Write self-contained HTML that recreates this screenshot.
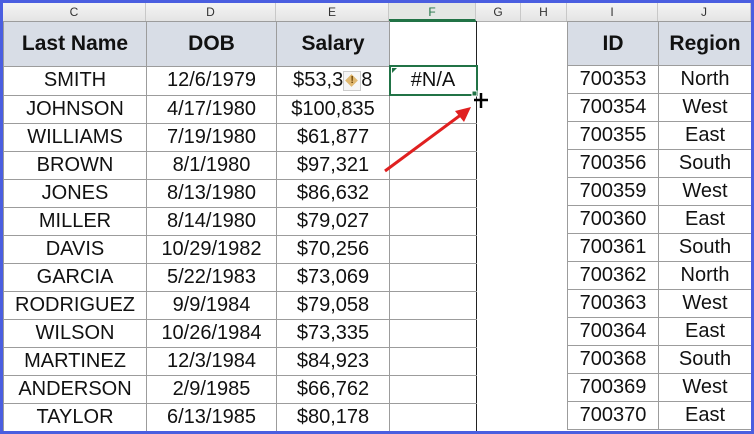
<!DOCTYPE html>
<html><head><style>
body{margin:0;width:754px;height:434px;overflow:hidden;background:#fff;font-family:"Liberation Sans",Arial,sans-serif;position:relative}
.frame{position:absolute;left:0;top:0;width:748px;height:428px;border:3px solid #4a5ee0;z-index:10;pointer-events:none}
.colhdr{position:absolute;top:3px;left:3px;width:748px;height:18px;background:linear-gradient(#f4f4f4,#e4e4e4);border-bottom:1px solid #b0b0b0}
.ch{position:absolute;top:3px;height:18px;font-size:12px;color:#333;text-align:center;line-height:18px;border-right:1px solid #c8c8c8;box-sizing:border-box}
table{position:absolute;border-collapse:collapse;table-layout:fixed}
td{border:1px solid #9c9c9c;text-align:center;font-size:20px;padding:0;height:27px;white-space:nowrap;overflow:hidden;color:#111}
tr.h td{height:43px;background:#d8dde6;font-weight:bold;font-size:21px}
td.f{border-left:1px solid #222;border-right:1px solid #222;background:#fff}
tr.h td.f{background:#fff;border-top:1px solid #217346}
</style></head><body>
<div class="colhdr"></div>
<div class="ch" style="left:3px;width:143px">C</div>
<div class="ch" style="left:146px;width:130px">D</div>
<div class="ch" style="left:276px;width:113px">E</div>
<div class="ch" style="left:389px;width:87px;background:#e4e7e4;border-bottom:2px solid #217346;color:#217346">F</div>
<div class="ch" style="left:476px;width:45px">G</div>
<div class="ch" style="left:521px;width:46px">H</div>
<div class="ch" style="left:567px;width:91px">I</div>
<div class="ch" style="left:658px;width:93px">J</div>
<table style="left:3px;top:21px;width:473px">
<col style="width:143px"><col style="width:130px"><col style="width:113px"><col style="width:87px">
<tr class="h"><td>Last Name</td><td>DOB</td><td>Salary</td><td class="f"></td></tr>
<tr><td>SMITH</td><td>12/6/1979</td><td>$53,3<span style="display:inline-block;width:16px;height:18px;background:#f6f6f6;border:1px solid #ccc;vertical-align:middle;position:relative"><span style="position:absolute;left:3px;top:4px;width:9px;height:9px;background:#e0b870;transform:rotate(45deg)"></span><span style="position:absolute;left:0;width:16px;top:0;font-size:10px;line-height:18px;color:#6a4000;font-weight:bold">!</span></span>8</td><td class="f" style="border:2px solid #217346;position:relative">#N/A<span style="position:absolute;left:1px;top:1px;border-top:5px solid #217346;border-right:5px solid transparent"></span></td></tr>
<tr><td>JOHNSON</td><td>4/17/1980</td><td>$100,835</td><td class="f"></td></tr>
<tr><td>WILLIAMS</td><td>7/19/1980</td><td>$61,877</td><td class="f"></td></tr>
<tr><td>BROWN</td><td>8/1/1980</td><td>$97,321</td><td class="f"></td></tr>
<tr><td>JONES</td><td>8/13/1980</td><td>$86,632</td><td class="f"></td></tr>
<tr><td>MILLER</td><td>8/14/1980</td><td>$79,027</td><td class="f"></td></tr>
<tr><td>DAVIS</td><td>10/29/1982</td><td>$70,256</td><td class="f"></td></tr>
<tr><td>GARCIA</td><td>5/22/1983</td><td>$73,069</td><td class="f"></td></tr>
<tr><td>RODRIGUEZ</td><td>9/9/1984</td><td>$79,058</td><td class="f"></td></tr>
<tr><td>WILSON</td><td>10/26/1984</td><td>$73,335</td><td class="f"></td></tr>
<tr><td>MARTINEZ</td><td>12/3/1984</td><td>$84,923</td><td class="f"></td></tr>
<tr><td>ANDERSON</td><td>2/9/1985</td><td>$66,762</td><td class="f"></td></tr>
<tr><td>TAYLOR</td><td>6/13/1985</td><td>$80,178</td><td class="f"></td></tr>
</table>
<table style="left:567px;top:21px;width:184px">
<col style="width:91px"><col style="width:93px">
<tr class="h"><td>ID</td><td>Region</td></tr>
<tr><td>700353</td><td>North</td></tr>
<tr><td>700354</td><td>West</td></tr>
<tr><td>700355</td><td>East</td></tr>
<tr><td>700356</td><td>South</td></tr>
<tr><td>700359</td><td>West</td></tr>
<tr><td>700360</td><td>East</td></tr>
<tr><td>700361</td><td>South</td></tr>
<tr><td>700362</td><td>North</td></tr>
<tr><td>700363</td><td>West</td></tr>
<tr><td>700364</td><td>East</td></tr>
<tr><td>700368</td><td>South</td></tr>
<tr><td>700369</td><td>West</td></tr>
<tr><td>700370</td><td>East</td></tr>
</table>
<svg style="position:absolute;left:0;top:0" width="754" height="434">
<rect x="472" y="91" width="5" height="5" fill="#217346" stroke="#fff" stroke-width="1"/>
<path d="M481 93V108M474 100H488" stroke="#000" stroke-width="2.5"/>
<line x1="385" y1="171" x2="462" y2="114" stroke="#e02020" stroke-width="3"/>
<polygon points="471,107 455,111 464,122" fill="#e02020"/>
</svg>
<div class="frame"></div>
</body></html>
